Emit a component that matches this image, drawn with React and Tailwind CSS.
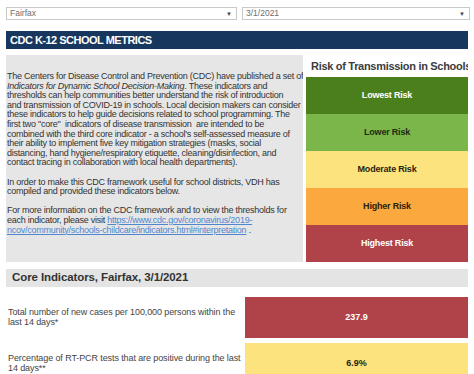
const font = { fontFamily: '"Liberation Sans", Arial, sans-serif' };

const introLines = [
  <>The Centers for Disease Control and Prevention (CDC) have published a set of</>,
  <><i>Indicators for Dynamic School Decision-Making</i>. These indicators and</>,
  <>thresholds can help communities better understand the risk of introduction</>,
  <>and transmission of COVID-19 in schools. Local decision makers can consider</>,
  <>these indicators to help guide decisions related to school programming. The</>,
  <>first two "core"&nbsp; indicators of disease transmission&nbsp; are intended to be</>,
  <>combined with the third core indicator - a school's self-assessed measure of</>,
  <>their ability to implement five key mitigation strategies (masks, social</>,
  <>distancing, hand hygiene/respiratory etiquette, cleaning/disinfection, and</>,
  <>contact tracing in collaboration with local health departments).</>,
];

const vdhLines = [
  <>In order to make this CDC framework useful for school districts, VDH has</>,
  <>compiled and provided these indicators below.</>,
];

const linkLines = [
  <>For more information on the CDC framework and to view the thresholds for</>,
  <>each indicator, please visit <span className="text-[#4f86d0] underline">https://www.cdc.gov/coronavirus/2019-</span></>,
  <><span className="text-[#4f86d0] underline">ncov/community/schools-childcare/indicators.html#interpretation</span> .</>,
];

const risks = [
  { label: 'Lowest Risk', bg: 'bg-[#4b7f1c]', fg: 'text-white' },
  { label: 'Lower Risk', bg: 'bg-[#7bb64a]', fg: 'text-[#1f2a14]' },
  { label: 'Moderate Risk', bg: 'bg-[#fde37d]', fg: 'text-[#2a2410]' },
  { label: 'Higher Risk', bg: 'bg-[#fba83f]', fg: 'text-[#2e1e0a]' },
  { label: 'Highest Risk', bg: 'bg-[#b0434a]', fg: 'text-white' },
];

function Dropdown({ value, className }) {
  return (
    <div className={`h-[13px] border border-[#c9c9c9] flex items-center justify-between pl-[3px] pr-[4px] ${className}`}>
      <span className="text-[8.5px] text-[#6e6e6e] leading-none">{value}</span>
      <span className="text-[6px] text-[#444] leading-none">▼</span>
    </div>
  );
}

function Lines({ lines }) {
  return lines.map((l, i) => (
    <div key={i} className="whitespace-nowrap">{l}</div>
  ));
}

function IndicatorRow({ text, value, bg, fg }) {
  return (
    <div className="flex items-center">
      <div className="w-[239px] pl-[2px] text-[9px] leading-[9.5px] text-[#444] tracking-[-0.1px]">
        <Lines lines={text} />
      </div>
      <div className={`w-[223px] h-[41px] flex items-center justify-center font-bold text-[9px] ${bg} ${fg}`}>
        {value}
      </div>
    </div>
  );
}

export default function App() {
  return (
    <div style={font} className="w-[474px] h-[374px] overflow-hidden bg-white px-[6px] pt-[7px]">
      <div className="flex gap-[5px]">
        <Dropdown value="Fairfax" className="w-[231px]" />
        <Dropdown value="3/1/2021" className="flex-1 -mr-[2px]" />
      </div>

      <div className="mt-[11px] h-[18px] bg-[#17375e] flex items-center pl-[4px]">
        <span className="text-white font-bold text-[11px] tracking-[-0.5px]">CDC K-12 SCHOOL METRICS</span>
      </div>

      <div className="mt-[6px] flex">
        <div className="w-[297px] h-[207px] bg-[#e6e6e6] overflow-hidden pt-[17px] pl-[1px] text-[9px] leading-[9.6px] text-[#333] tracking-[-0.25px]">
          <Lines lines={introLines} />
          <div className="h-[9.6px]" />
          <Lines lines={vdhLines} />
          <div className="h-[9.6px]" />
          <Lines lines={linkLines} />
        </div>
        <div className="ml-[3px] flex-1 flex flex-col overflow-hidden">
          <div className="h-[22px] pl-[5px] pt-[3px] whitespace-nowrap text-[11px] font-bold text-[#3c3c3c] tracking-[-0.3px]">
            Risk of Transmission in Schools
          </div>
          {risks.map((r) => (
            <div key={r.label} className={`h-[37px] flex items-center justify-center font-bold text-[9px] tracking-[-0.2px] ${r.bg} ${r.fg}`}>
              {r.label}
            </div>
          ))}
        </div>
      </div>

      <div className="mt-[7px] h-[18px] bg-[#e4e4e4] flex items-center pl-[6px]">
        <span className="text-[11.5px] font-bold text-[#333] tracking-[-0.1px]">Core Indicators, Fairfax, 3/1/2021</span>
      </div>

      <div className="mt-[10px] flex flex-col gap-[5px]">
        <IndicatorRow
          text={[<>Total number of new cases per 100,000 persons within the</>, <>last 14 days*</>]}
          value="237.9"
          bg="bg-[#b0434a]"
          fg="text-white"
        />
        <IndicatorRow
          text={[<>Percentage of RT-PCR tests that are positive during the last</>, <>14 days**</>]}
          value="6.9%"
          bg="bg-[#fde37d]"
          fg="text-[#2a2410]"
        />
      </div>
    </div>
  );
}
